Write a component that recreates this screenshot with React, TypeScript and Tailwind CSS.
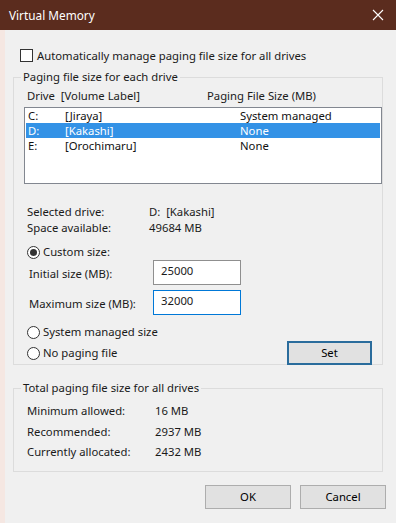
import React from "react";

type Drive = { letter: string; label: string; size: string };

const drives: Drive[] = [
  { letter: "C:", label: "[Jiraya]", size: "System managed" },
  { letter: "D:", label: "[Kakashi]", size: "None" },
  { letter: "E:", label: "[Orochimaru]", size: "None" },
];

function Radio({ checked, label }: { checked?: boolean; label: string }) {
  return (
    <div className="flex items-center h-[16px]">
      <span className="w-[13px] h-[13px] rounded-full border border-[#333333] bg-white flex items-center justify-center">
        {checked && <span className="w-[7px] h-[7px] rounded-full bg-[#333333]" />}
      </span>
      <span className="ml-[3px]">{label}</span>
    </div>
  );
}

function WinButton({ children, primary, className }: { children: React.ReactNode; primary?: boolean; className?: string }) {
  return (
    <button
      className={`h-[24px] bg-[#e1e1e1] text-[#000000] border ${
        primary ? "border-[#2a6c9c] border-2" : "border-[#adadad]"
      } ${className ?? ""}`}
    >
      {children}
    </button>
  );
}

export default function App() {
  return (
    <div
      className="w-[396px] h-[523px] overflow-hidden bg-[#f0f0f0] text-[11.3px] leading-[16px] text-[#1a1a1a]"
      style={{ fontFamily: '"Noto Sans", "Liberation Sans", sans-serif' }}
    >
      {/* Title bar */}
      <div className="h-[30px] bg-[#5b2c1e] flex items-center justify-between pl-[9px] pr-[10px] text-white">
        <span className="text-[11.8px]">Virtual Memory</span>
        <svg width="12" height="12" viewBox="0 0 12 12" className="mr-[2px]">
          <path d="M1 1L11 11M11 1L1 11" stroke="#ffffff" strokeWidth="1.1" />
        </svg>
      </div>

      <div className="h-[493px] border-l-[5px] border-[#f5e7e2] flex flex-col">
        {/* Auto manage */}
        <div className="flex items-center h-[13px] mt-[19px] ml-[15px]">
          <span className="w-[13px] h-[13px] border border-[#333333] bg-white" />
          <span className="ml-[4px]">Automatically manage paging file size for all drives</span>
        </div>

        {/* Paging file size for each drive */}
        <fieldset className="ml-[8px] mt-[7px] w-[370px] border border-[#dcdcdc] pb-0">
          <legend className="ml-[7px] px-[2px]">Paging file size for each drive</legend>

          <div className="flex mt-[3px] pl-[13px]">
            <span className="w-[180px]">Drive&nbsp; [Volume Label]</span>
            <span>Paging File Size (MB)</span>
          </div>

          <div className="ml-[10px] mt-[3px] w-[358px] h-[77px] border border-[#828790] bg-white px-[1px]">
            {drives.map((d, i) => (
              <div
                key={d.letter}
                className={`flex h-[15px] leading-[15px] items-center pl-[2px] ${
                  i === 1 ? "bg-[#3392e6] text-white" : "text-[#111111]"
                }`}
              >
                <span className="w-[37px]">{d.letter}</span>
                <span className="w-[175px]">{d.label}</span>
                <span>{d.size}</span>
              </div>
            ))}
          </div>

          <div className="mt-[20px] pl-[13px]">
            <div className="flex">
              <span className="w-[122px]">Selected drive:</span>
              <span>D:&nbsp; [Kakashi]</span>
            </div>
            <div className="flex">
              <span className="w-[122px]">Space available:</span>
              <span>49684 MB</span>
            </div>
          </div>

          <div className="mt-[8px] pl-[13px]">
            <Radio checked label="Custom size:" />
          </div>

          <div className="flex items-center pl-[15px]">
            <span className="w-[124px] mt-[2px]">Initial size (MB):</span>
            <div className="w-[88px] h-[25px] border border-[#8f8f8f] bg-white pl-[7px] pt-[2px]">25000</div>
          </div>

          <div className="flex items-center pl-[15px] mt-[5px]">
            <span className="w-[124px] mt-[2px]">Maximum size (MB):</span>
            <div className="w-[88px] h-[25px] border border-[#0078d7] bg-white pl-[7px] pt-[2px]">32000</div>
          </div>

          <div className="flex mt-[9px] pl-[13px] pr-[10px]">
            <div className="flex flex-col gap-[5px]">
              <Radio label="System managed size" />
              <Radio label="No paging file" />
            </div>
            <WinButton primary className="ml-auto mt-[17px] mb-[-1px] w-[85px] h-[23px]">
              Set
            </WinButton>
          </div>
        </fieldset>

        {/* Total paging file size */}
        <fieldset className="ml-[8px] mt-[15px] w-[370px] border border-[#dcdcdc] pb-[11px]">
          <legend className="ml-[7px] px-[2px]">Total paging file size for all drives</legend>
          <div className="pl-[13px] mt-[7px] flex flex-col">
            <div className="flex">
              <span className="w-[128px]">Minimum allowed:</span>
              <span>16 MB</span>
            </div>
            <div className="flex mt-[5px]">
              <span className="w-[128px]">Recommended:</span>
              <span>2937 MB</span>
            </div>
            <div className="flex mt-[4px]">
              <span className="w-[128px]">Currently allocated:</span>
              <span>2432 MB</span>
            </div>
          </div>
        </fieldset>

        <div className="flex justify-end gap-[9px] mt-[13px] pr-[10px]">
          <WinButton className="w-[86px]">OK</WinButton>
          <WinButton className="w-[86px]">Cancel</WinButton>
        </div>
      </div>
    </div>
  );
}
